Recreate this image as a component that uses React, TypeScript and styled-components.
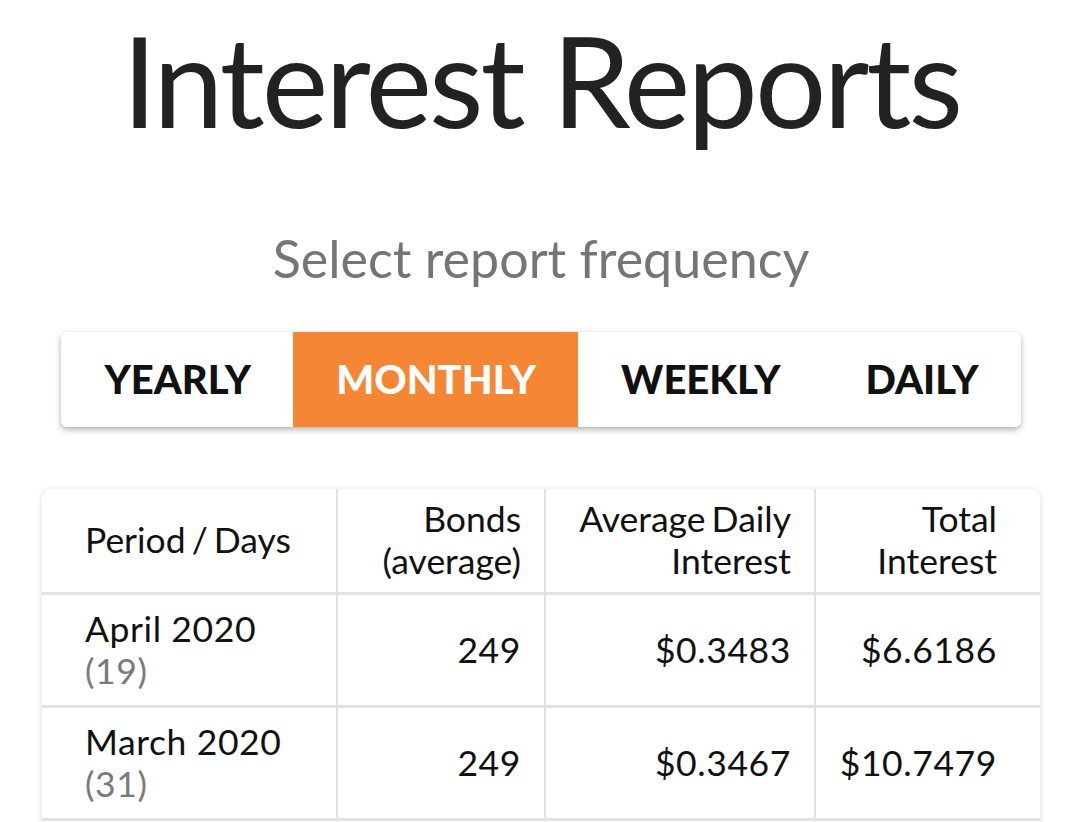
import React, { useState } from "react";
import styled, { createGlobalStyle } from "styled-components";

const GlobalStyle = createGlobalStyle`
  html, body {
    margin: 0;
    padding: 0;
    background: #ffffff;
    font-family: Lato, "Open Sans", sans-serif;
  }
  * { box-sizing: border-box; }
`;

const Page = styled.main`
  display: flex;
  flex-direction: column;
  align-items: center;
  padding: 4px 40px 0 42px;
`;

const Title = styled.h1`
  margin: 0;
  font-family: Lato, sans-serif;
  font-weight: 400;
  font-size: 126px;
  line-height: 1.2;
  letter-spacing: -3px;
  color: #222222;
  text-align: center;
`;

const Subtitle = styled.h2`
  margin: 72px 0 0;
  font-family: Lato, sans-serif;
  font-weight: 400;
  font-size: 52px;
  line-height: 1.2;
  color: #757575;
  text-align: center;
`;

const TabBar = styled.div`
  margin-top: 42px;
  display: flex;
  height: 95px;
  background: #ffffff;
  border-radius: 6px;
  overflow: hidden;
  box-shadow: 0 3px 6px rgba(0, 0, 0, 0.28), 0 0 3px rgba(0, 0, 0, 0.08);
`;

const Tab = styled.button<{ $active: boolean }>`
  display: flex;
  align-items: center;
  justify-content: center;
  padding: 0 42px 0 43px;
  border: none;
  margin: 0;
  font-family: Lato, sans-serif;
  font-weight: 900;
  font-size: 40px;
  text-transform: uppercase;
  letter-spacing: 0;
  cursor: pointer;
  background: ${(p) => (p.$active ? "#f58634" : "#ffffff")};
  color: ${(p) => (p.$active ? "#ffffff" : "#111111")};
`;

const TableCard = styled.div`
  margin-top: 62px;
  width: 998px;
  background: #ffffff;
  border-radius: 9px 9px 0 0;
  box-shadow: 0 1px 6px rgba(0, 0, 0, 0.16);
  overflow: hidden;
`;

const Table = styled.table`
  width: 100%;
  border-collapse: collapse;
  table-layout: fixed;
  font-family: Lato, sans-serif;
  font-size: 35.5px;
  line-height: 42px;
  font-variant-numeric: tabular-nums;
  color: #111111;
`;

const HeadCell = styled.th<{ $align?: "left" | "right" }>`
  font-weight: 400;
  word-spacing: -3px;
  text-align: ${(p) => p.$align ?? "right"};
  vertical-align: middle;
  padding: 9.5px 23px;
  border-left: 2px solid #e2e2e2;
  &:first-child {
    border-left: none;
    padding-left: 43px;
  }
  &:last-child {
    padding-right: 43px;
  }
`;

const Row = styled.tr`
  border-top: 3px solid #e2e2e2;
`;

const Cell = styled.td<{ $align?: "left" | "right" }>`
  text-align: ${(p) => p.$align ?? "right"};
  vertical-align: middle;
  letter-spacing: 0.6px;
  padding: 13px 23px;
  border-left: 2px solid #e2e2e2;
  white-space: nowrap;
  &:first-child {
    border-left: none;
    padding-left: 43px;
  }
  &:last-child {
    padding-right: 43px;
  }
`;

const Days = styled.span`
  display: block;
  color: #7a7a7a;
`;

const tabs = ["Yearly", "Monthly", "Weekly", "Daily"];

const rows = [
  { period: "April 2020", days: 19, bonds: "249", avg: "$0.3483", total: "$6.6186" },
  { period: "March 2020", days: 31, bonds: "249", avg: "$0.3467", total: "$10.7479" },
  { period: "February 2020", days: 29, bonds: "249", avg: "$0.3451", total: "$10.0079" },
];

export default function App() {
  const [active, setActive] = useState("Monthly");
  return (
    <>
      <GlobalStyle />
      <Page>
        <Title>Interest Reports</Title>
        <Subtitle>Select report frequency</Subtitle>
        <TabBar>
          {tabs.map((t) => (
            <Tab key={t} $active={t === active} onClick={() => setActive(t)}>
              {t}
            </Tab>
          ))}
        </TabBar>
        <TableCard>
          <Table>
            <colgroup>
              <col style={{ width: 295 }} />
              <col style={{ width: 208 }} />
              <col style={{ width: 270 }} />
              <col style={{ width: 225 }} />
            </colgroup>
            <thead>
              <tr>
                <HeadCell $align="left">Period / Days</HeadCell>
                <HeadCell>
                  Bonds
                  <br />
                  (average)
                </HeadCell>
                <HeadCell>
                  Average Daily
                  <br />
                  Interest
                </HeadCell>
                <HeadCell>
                  Total
                  <br />
                  Interest
                </HeadCell>
              </tr>
            </thead>
            <tbody>
              {rows.map((r) => (
                <Row key={r.period}>
                  <Cell $align="left">
                    {r.period}
                    <Days>({r.days})</Days>
                  </Cell>
                  <Cell>{r.bonds}</Cell>
                  <Cell>{r.avg}</Cell>
                  <Cell>{r.total}</Cell>
                </Row>
              ))}
            </tbody>
          </Table>
        </TableCard>
      </Page>
    </>
  );
}
